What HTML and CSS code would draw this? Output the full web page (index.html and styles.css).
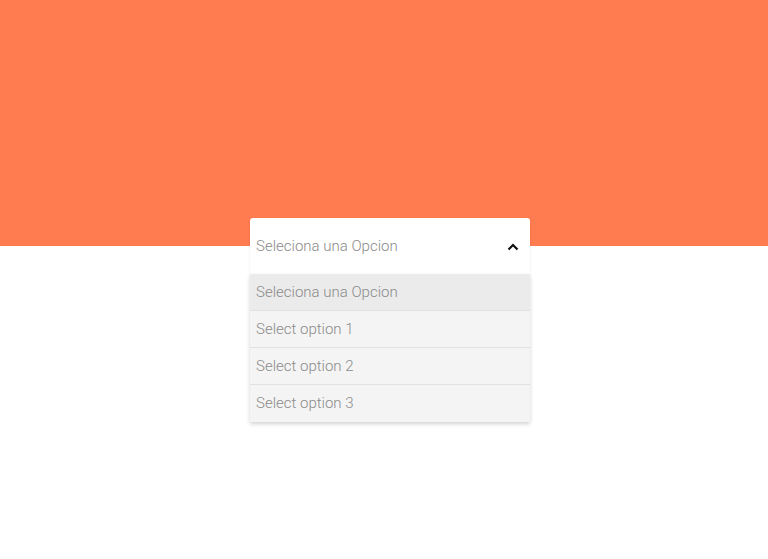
FILE: index.html
```html
<!DOCTYPE html>
<html lang="es">
<head>
    <meta charset="UTF-8">
    <meta name="viewport" content="width=device-width, initial-scale=1.0">
    <title>Select</title>
    <link rel="stylesheet" href="styles.css">
</head>
<body>
    <header class="banner"></header>

    <main class="stage">
        <div class="select">
            <div class="select-head">
                <span>Seleciona una Opcion</span>
                <svg class="chevron" width="12" height="8" viewBox="0 0 12 8">
                    <path d="M1.5 6.5 L6 2 L10.5 6.5" fill="none" stroke="#111" stroke-width="2.2"/>
                </svg>
            </div>
            <ul class="select-list">
                <li class="active">Seleciona una Opcion</li>
                <li>Select option 1</li>
                <li>Select option 2</li>
                <li>Select option 3</li>
            </ul>
        </div>
    </main>
</body>
</html>
```

FILE: styles.css
```css
:root {
    --orange: #ff7b50;
    --text-color: #8a8a8a;
    --item-bg: #f4f4f4;
    --item-active: #ebebeb;
    --line: #e2e2e2;
}

* {
    margin: 0;
    padding: 0;
    box-sizing: border-box;
}

body {
    font-family: Roboto, 'Liberation Sans', Arial, sans-serif;
    font-weight: 300;
    background: #fff;
    height: 559px;
    overflow: hidden;
}

.banner {
    height: 246px;
    background: var(--orange);
}

.stage {
    display: flex;
    justify-content: center;
    margin-top: -28px;
    padding-left: 12px;
}

.select {
    width: 280px;
    position: relative;
}

.select-head {
    height: 56px;
    background: #fff;
    border-radius: 3px 3px 0 0;
    display: flex;
    align-items: center;
    justify-content: space-between;
    padding: 0 11px 0 6px;
    font-size: 15px;
    color: var(--text-color);
    box-shadow: 0 1px 3px rgba(0,0,0,0.08);
}

.chevron {
    display: block;
    margin-top: 1px;
}

.select-list {
    list-style: none;
    box-shadow: 0 2px 4px rgba(0,0,0,0.18);
}

.select-list li {
    height: 37px;
    line-height: 36px;
    padding-left: 6px;
    font-size: 15px;
    color: var(--text-color);
    background: var(--item-bg);
    border-bottom: 1px solid var(--line);
}

.select-list li:last-child {
    border-bottom: none;
}

.select-list li.active {
    background: var(--item-active);
}
```
